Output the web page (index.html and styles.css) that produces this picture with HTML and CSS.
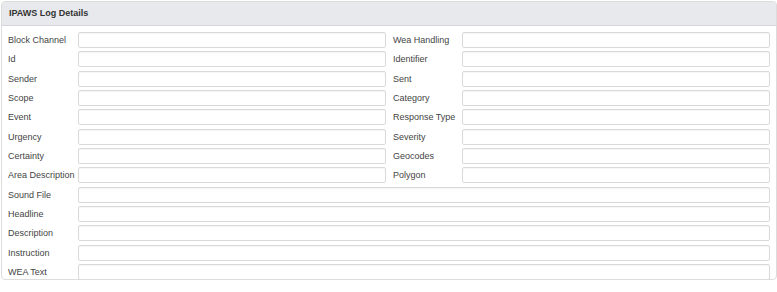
FILE: index.html
```html
<!DOCTYPE html>
<html>
<head>
<meta name="viewport" content="width=device-width, initial-scale=1">
<link rel="stylesheet" href="styles.css">
</head>
<body>
<div class="panel">
  <div class="panel-head">IPAWS Log Details</div>
  <div class="log-form">
    <label>Block Channel</label><input type="text">
    <label class="rl">Wea Handling</label><input type="text">
    <label>Id</label><input type="text">
    <label class="rl">Identifier</label><input type="text">
    <label>Sender</label><input type="text">
    <label class="rl">Sent</label><input type="text">
    <label>Scope</label><input type="text">
    <label class="rl">Category</label><input type="text">
    <label>Event</label><input type="text">
    <label class="rl">Response Type</label><input type="text">
    <label>Urgency</label><input type="text">
    <label class="rl">Severity</label><input type="text">
    <label>Certainty</label><input type="text">
    <label class="rl">Geocodes</label><input type="text">
    <label>Area Description</label><input type="text">
    <label class="rl">Polygon</label><input type="text">
    <label>Sound File</label><input type="text" class="wide">
    <label>Headline</label><input type="text" class="wide">
    <label>Description</label><input type="text" class="wide">
    <label>Instruction</label><input type="text" class="wide">
    <label>WEA Text</label><input type="text" class="wide">
  </div>
</div>
</body>
</html>
```

FILE: styles.css
```css
* {box-sizing: border-box;}
body {margin: 0; background: #fff; font-family: "Liberation Sans", Arial, Helvetica, sans-serif;}

.panel {
  margin: 1px 0 0 1px;
  width: 776px;
  height: 279px;
  border: 1px solid #dcdcdc;
  border-radius: 4px;
  overflow: hidden;
}

.panel-head {
  height: 24px;
  line-height: 23px;
  padding-left: 7px;
  background: #e8e9ed;
  border-bottom: 1px solid #d6d7da;
  font-size: 9px;
  font-weight: bold;
  color: #333;
}

.log-form {
  display: grid;
  grid-template-columns: 70px 308px 76px 308px;
  grid-auto-rows: 16px;
  row-gap: 3.33px;
  padding: 6px 5px 0 6px;
}

.log-form label {
  font-size: 9px;
  color: #444;
  line-height: 16px;
  white-space: nowrap;
}

.log-form .rl {padding-left: 7px;}

.log-form input {
  height: 16px;
  margin: 0;
  padding: 0 4px;
  border: 1px solid #d9d9d9;
  border-radius: 2px;
  box-shadow: inset 0 1px 1px rgba(0,0,0,0.04);
  background: #fff;
}

.log-form .wide {grid-column: 2 / 5;}
```
